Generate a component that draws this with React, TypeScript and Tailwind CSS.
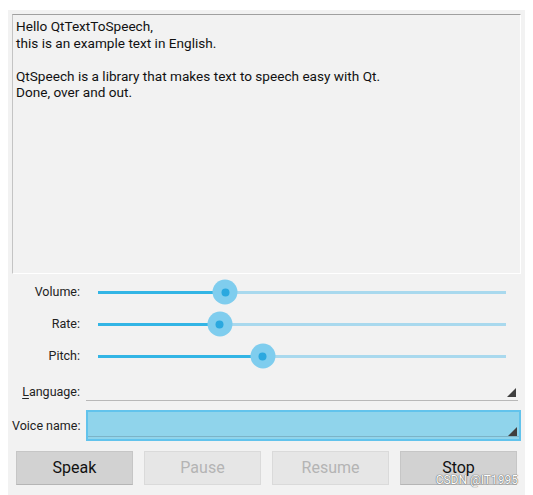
import React from "react";

const FONT = "font-['Roboto','Liberation_Sans',sans-serif]";

const text = [
  "Hello QtTextToSpeech,",
  "this is an example text in English.",
  "",
  "QtSpeech is a library that makes text to speech easy with Qt.",
  "Done, over and out.",
];

function Corner() {
  return (
    <svg width="9" height="9" viewBox="0 0 9 9" className="absolute right-[2px] bottom-[3px]">
      <polygon points="9,0 9,9 0,9" fill="#3f3f3f" />
    </svg>
  );
}

function Slider({ label, value }: { label: string; value: number }) {
  return (
    <div className="flex h-[32px] items-center">
      <div className="w-[68px] whitespace-nowrap text-right text-[12.5px] text-[#222]">{label}</div>
      <div className="ml-[6px] w-[432px] px-[12px]">
        <div className="relative h-[3px] bg-[#a9d9ee]">
          <div className="absolute left-0 top-0 h-[3px] bg-[#33b5e5]" style={{ width: `${value}%` }} />
          <div
            className="absolute top-1/2 flex h-[25px] w-[25px] -translate-x-1/2 -translate-y-1/2 items-center justify-center rounded-full bg-[#7fcdee]"
            style={{ left: `${value}%` }}
          >
            <div className="h-[8px] w-[8px] rounded-full bg-[#2ba8df]" />
          </div>
        </div>
      </div>
    </div>
  );
}

function Btn({ label, enabled }: { label: string; enabled?: boolean }) {
  return (
    <div
      className={
        enabled
          ? "flex h-[34px] w-[117px] items-center justify-center border border-[#c6c6c6] border-b-[#b5b5b5] bg-[#d2d2d2] text-[16px] text-[#111]"
          : "flex h-[34px] w-[117px] items-center justify-center border border-[#dadada] bg-[#e6e6e6] text-[16px] text-[#b4b4b4]"
      }
    >
      {label}
    </div>
  );
}

export default function App() {
  return (
    <div className={`h-[495px] w-[533px] overflow-hidden bg-white pl-[8px] pt-[10px] ${FONT}`}>
      <div className="relative flex h-[485px] w-[517px] flex-col bg-[#f2f2f2] px-[4px] pt-[4px]">
        {/* Text edit */}
        <div className="h-[260px] w-[509px] border border-t-[#a0a0a0] border-l-[#c4c4c4] border-r-white border-b-white px-[3px] pt-[3px] text-[13.6px] leading-[16.5px] text-[#111]">
          {text.map((t, i) => (
            <div key={i} className="h-[16.5px] whitespace-nowrap">
              {t}
            </div>
          ))}
        </div>

        <div className="mt-[2px]">
          <Slider label="Volume:" value={31.2} />
          <Slider label="Rate:" value={29.9} />
          <Slider label="Pitch:" value={40.4} />
        </div>

        {/* Language */}
        <div className="flex h-[32px] items-start">
          <div className="w-[68px] whitespace-nowrap pt-[11px] text-right text-[12.5px] text-[#222]">
            <span className="underline underline-offset-2">L</span>anguage:
          </div>
          <div className="relative ml-[6px] h-[29px] w-[432px] border-b border-[#b8b8b8]">
            <Corner />
          </div>
        </div>

        {/* Voice name */}
        <div className="mt-[6px] flex h-[31px] items-center">
          <div className="w-[68px] whitespace-nowrap pt-[2px] text-right text-[12.5px] text-[#222]">Voice name:</div>
          <div className="relative ml-[6px] h-[31px] w-[435px] border-2 border-[#62c3ec] bg-[#90d4eb]">
            <div className="absolute bottom-[2px] left-0 right-0 h-px bg-[#7cb3c7]" />
            <Corner />
          </div>
        </div>

        {/* Buttons */}
        <div className="mt-[10px] flex gap-[11px] pl-[4px]">
          <Btn label="Speak" enabled />
          <Btn label="Pause" />
          <Btn label="Resume" />
          <Btn label="Stop" enabled />
        </div>

        <div className="absolute bottom-[9px] right-[7px] text-[12px] leading-none text-white [text-shadow:0_0_1px_#555,0_0_1px_#555]">
          CSDN @IT1995
        </div>
      </div>
    </div>
  );
}
